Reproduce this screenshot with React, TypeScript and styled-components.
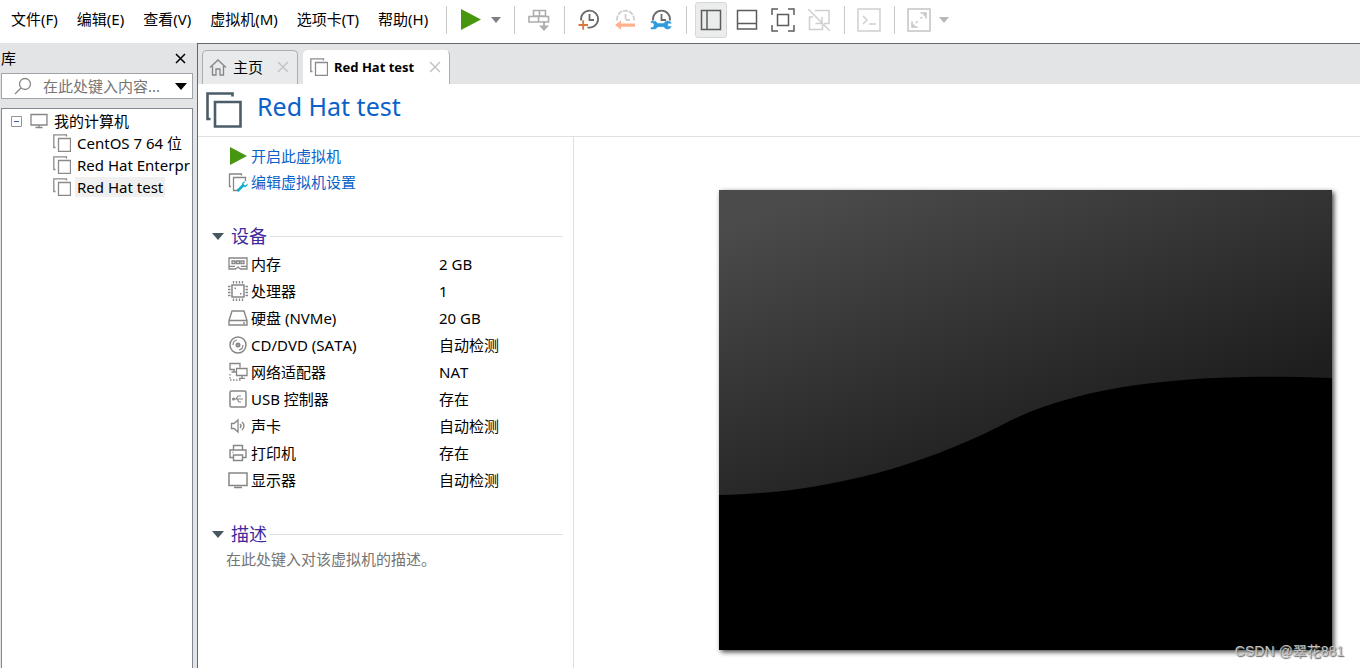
import React from "react";
import styled, { createGlobalStyle } from "styled-components";

const Global = createGlobalStyle`
  *, *::before, *::after { box-sizing: border-box; }
  html, body { margin: 0; }
  body {
    background: #fff;
    color: #000;
    font: 15px/20px "Noto Sans", "Noto Sans CJK SC", sans-serif;
    font-kerning: none;
    overflow: hidden;
  }
  button, input { font: inherit; color: inherit; }
  svg { display: block; flex: none; }
`;

const Window = styled.div`
  position: relative;
  display: flex;
  flex-direction: column;
  height: 100vh;
`;

const PlainButton = styled.button`
  display: flex;
  align-items: center;
  justify-content: center;
  padding: 0;
  border: 0;
  background: none;
  white-space: nowrap;
`;

/* Menu and toolbar */
const TopBar = styled.header`
  display: flex;
  align-items: center;
  flex: none;
  height: 43px;
  padding: 0 0 4px 11px;
`;

const Menu = styled.nav`
  display: flex;
  gap: 19px;
  margin-right: 18px;
  padding-bottom: 2px;
`;

const Separator = styled.span`
  width: 1px;
  height: 28px;
  background: #c8c8c8;
`;

const ToolGroup = styled.div<{ $end?: number }>`
  display: flex;
  align-items: center;
  gap: 4px;
  padding: 0 ${(p) => p.$end ?? 9}px 0 8px;
`;

const Tool = styled(PlainButton)<{ $on?: boolean }>`
  width: 32px;
  height: 36px;
  border: 1px solid ${(p) => (p.$on ? "#d5d8d8" : "transparent")};
  border-radius: 3px;
  background: ${(p) => (p.$on ? "#ebeded" : "transparent")};
`;

const Drop = styled(PlainButton)`
  width: 10px;
  height: 36px;
`;

/* Library */
const Body = styled.div`
  display: flex;
  flex: 1;
  min-height: 0;
  background: #e3e4e6;
`;

const Library = styled.aside`
  display: flex;
  flex-direction: column;
  flex: none;
  width: 197px;
  padding: 0 4px 0 1px;
`;

const LibraryHead = styled.div`
  display: flex;
  align-items: center;
  justify-content: space-between;
  height: 30px;
  padding-right: 7px;
`;

const Search = styled.div`
  display: flex;
  align-items: center;
  height: 26px;
  padding: 0 5px 0 12px;
  border: 1px solid #a0a4a8;
  background: #fff;
`;

const SearchInput = styled.input`
  flex: 1;
  min-width: 0;
  margin-left: 11px;
  padding: 0;
  border: 0;
  outline: 0;
  background: none;
  &::placeholder { color: #757575; opacity: 1; }
`;

const Tree = styled.ul`
  flex: 1;
  margin: 9px 0 0;
  padding: 1px 0 0;
  border: 1px solid #828790;
  border-bottom: 0;
  background: #fff;
  list-style: none;
  overflow: hidden;
`;

const TreeRow = styled.li<{ $child?: boolean }>`
  display: flex;
  align-items: center;
  height: 22px;
  padding-left: ${(p) => (p.$child ? 51 : 9)}px;
  white-space: nowrap;
`;

const TreeText = styled.span<{ $selected?: boolean }>`
  margin-left: 4px;
  padding: 0 2px;
  background: ${(p) => (p.$selected ? "#f0f0f0" : "transparent")};
`;

/* Main area */
const Main = styled.main`
  display: flex;
  flex-direction: column;
  flex: 1;
  min-width: 0;
  border: solid #65686b;
  border-width: 1px 0 0 1px;
`;

const Tabs = styled.div`
  display: flex;
  align-items: flex-end;
  flex: none;
  gap: 5px;
  height: 40px;
  padding-left: 4px;
`;

const Tab = styled.div<{ $active?: boolean }>`
  display: flex;
  align-items: center;
  height: 34px;
  padding: 0 8px 2px 6px;
  border: 1px solid ${(p) => (p.$active ? "#fff" : "#adadad")};
  border-right-color: #adadad;
  border-bottom: 0;
  border-radius: 5px 5px 0 0;
  background: ${(p) => (p.$active ? "#fff" : "#e9eaeb")};
`;

const TabName = styled(PlainButton)<{ $active?: boolean }>`
  gap: 6px;
  margin-right: ${(p) => (p.$active ? 15 : 14)}px;
  font-size: ${(p) => (p.$active ? 13 : 15)}px;
  font-weight: ${(p) => (p.$active ? 700 : 400)};
`;

const Title = styled.div`
  display: flex;
  align-items: center;
  flex: none;
  gap: 15px;
  height: 53px;
  padding: 0 8px;
  border-bottom: 1px solid #e0e0e0;
  background: #fff;
`;

const Heading = styled.h1`
  margin: 0 0 8px;
  color: #0a62c9;
  font-size: 25px;
  line-height: 32px;
  font-weight: 400;
`;

const Content = styled.div`
  display: flex;
  flex: 1;
  min-height: 0;
  background: #fff;
`;

const Details = styled.div`
  flex: none;
  width: 376px;
  padding: 6px 10px 0 14px;
  border-right: 1px solid #e0e0e0;
`;

const Actions = styled.div`
  padding-left: 16px;
`;

const Action = styled.a`
  display: flex;
  align-items: center;
  gap: 3px;
  height: 26px;
  color: #0a62c9;
  text-decoration: none;
`;

const Section = styled.section`
  margin-top: 28px;
`;

const SectionHead = styled.h2`
  display: flex;
  align-items: center;
  height: 26px;
  margin: 0 0 1px;
  color: #40299e;
  font-size: 18px;
  line-height: 26px;
  font-weight: 400;
  svg { margin-right: 7px; }
  &::after {
    content: "";
    flex: 1;
    height: 1px;
    margin-left: 3px;
    background: #e0e0e0;
  }
`;

const Devices = styled.table`
  width: 100%;
  border-spacing: 0;
  td, th {
    height: 27px;
    padding: 0;
    font-weight: 400;
    text-align: left;
  }
  th { width: 227px; }
`;

const DeviceName = styled.div`
  display: flex;
  align-items: center;
  gap: 3px;
  padding-left: 16px;
`;

const Note = styled.p`
  margin: 0;
  padding-left: 14px;
  color: #757575;
  line-height: 22px;
`;

const Preview = styled.div`
  flex: 1;
  min-width: 0;
  padding: 53px 28px 18px 145px;
`;

const Screen = styled.div`
  box-shadow: 2px 2px 5px rgba(0, 0, 0, 0.75);
  svg { width: 100%; height: auto; }
`;

const Watermark = styled.span`
  position: absolute;
  right: 16px;
  bottom: 7px;
  color: #c4c4c4;
  font: 14px/20px "Liberation Sans", "Noto Sans CJK SC", sans-serif;
  text-shadow: 1px 1px 1px #666;
`;

/* Icons */
type IconProps = { w: number; h: number; color?: string; children: React.ReactNode };
const Icon = ({ w, h, color = "#868686", children }: IconProps) => (
  <svg width={w} height={h} viewBox={`0 0 ${w} ${h}`} fill="none" stroke={color} strokeWidth="1.5" aria-hidden="true">
    {children}
  </svg>
);

const Play = ({ w, h }: { w: number; h: number }) => (
  <Icon w={w} h={h} color="none"><path d={`M0 0L${w} ${h / 2}L0 ${h}Z`} fill="#47960f" /></Icon>
);

const Down = ({ w = 10, h = 6, fill = "#808080" }) => (
  <Icon w={w} h={h} color="none"><path d={`M0 0H${w}L${w / 2} ${h}Z`} fill={fill} /></Icon>
);

const Cross = ({ size = 12, color = "#c4c4c4" }) => (
  <Icon w={size} h={size} color={color}><path d={`M1 1L${size - 1} ${size - 1}M${size - 1} 1L1 ${size - 1}`} /></Icon>
);

const Vm = () => (
  <Icon w={18} h={18} color="#8a8a8a"><path d="M5.5 4.5h12v13h-12zM2.5 13.5H.8V.8h12.7v1.7" strokeWidth="1.3" /></Icon>
);

const VmLarge = () => (
  <Icon w={36} h={36} color="#4b5d69"><path d="M9 10h25.500v24.500H9zM4.500 27H1.500V1.500h25v3" strokeWidth="2.600" /></Icon>
);

const VmEdit = () => (
  <Icon w={20} h={19}>
    <path d="M10 17.500H5.500v-13h12V8M3 13.500H1.500V1h12v1.500" strokeWidth="1.300" />
    <path d="M9.500 18l5.500-5.500" stroke="#10acd0" strokeWidth="2.600" />
    <path d="M17.500 8.500l-2 2 .5 1.500 1.500.5 2-2c.5 2-1 4-3.500 3.500l-2-2c-.3-2 1.500-4 3.500-3.500z" fill="#10acd0" stroke="none" />
  </Icon>
);

const Clock = ({ color = "#6a6a6a", low = false }) => (
  <>
    <path d={low ? "M3.100 11.500A8.500 8.500 0 1 1 19.900 11.500" : "M3.200 11.500A8.500 8.500 0 1 1 9.500 18.300"} stroke={color} strokeWidth="1.800" />
    <path d="M11.500 5v6H16" stroke={color} strokeWidth="1.800" />
  </>
);

const Snapshot = () => (
  <Icon w={22} h={22}><Clock /><path d="M.5 16h9.500M5.200 11.300v9.500" stroke="#d9763c" strokeWidth="1.800" /></Icon>
);

const Revert = () => (
  <Icon w={22} h={22}>
    <g strokeDasharray="5 1"><Clock color="#cfcfcf" low /></g>
    <path d="M1 16l6-4.500v3h14v3.200H7v3z" fill="#ffb18d" stroke="none" />
  </Icon>
);

const Manage = () => (
  <Icon w={22} h={22}>
    <Clock low />
    <path d="M1 12.300h4.500L7.800 14.500H14c.8-1.700 2-2.500 3.500-2.500 2 0 3.200.9 3.800 2.300h-3.500v3.200h3.500c-.7 1.500-1.800 2.500-3.800 2.500-1.500 0-2.700-.8-3.500-2.300H7.800l-2.300 2.300H1v-1.500h2.200l1-2.500-1-2.300H1z" fill="#2f9bdd" stroke="#2f9bdd" strokeWidth="0.500" />
  </Icon>
);

const Keys = () => (
  <Icon w={22} h={22} color="#adadad">
    <path d="M5.500 1.500h12V7h-12zM11.500 1.500V7M1 7.500h19.500V13H1zM10.500 7.500V13" strokeWidth="1.600" />
    <path d="M16 12v6" strokeWidth="1.800" />
    <path d="M11 16.500h10L16 22z" fill="#adadad" stroke="none" />
  </Icon>
);

const deviceIcons: Record<string, React.ReactNode> = {
  memory: <path d="M1 4h18v11h-6.500L10 13l-2.500 2H1zM4 7h3v2.500H4zM8.500 7h3v2.500h-3zM13 7h3v2.500h-3zM1 12.300h6M13 12.300h6" strokeWidth="1.300" />,
  cpu: (
    <>
      <path d="M4 4h12v12H4z" />
      <path d="M5.500 0v2.500M8.500 0v2.500M11.500 0v2.500M14.500 0v2.500M5.500 17.500V20M8.500 17.500V20M11.500 17.500V20M14.500 17.500V20M0 5.500h2.500M0 8.500h2.500M0 11.500h2.500M0 14.500h2.500M17.500 5.500H20M17.500 8.500H20M17.500 11.500H20M17.500 14.500H20" strokeWidth="1.300" />
      <path d="M6.500 7.300H8M12 12.700h1.500" strokeWidth="1.600" />
    </>
  ),
  disk: <path d="M4 3h12l3 9.500v4.500H1v-4.500zM1 12.500h18M15 15h2" strokeWidth="1.400" />,
  cd: (
    <>
      <circle cx="10" cy="10" r="8" />
      <circle cx="10" cy="10" r="1.500" strokeWidth="2" />
      <path d="M5 10a5 5 0 0 1 4-5M15 10a5 5 0 0 1-4 5" strokeWidth="1.200" />
    </>
  ),
  network: (
    <>
      <path d="M7 7.500H2v-6h10v4M8.500 6.500H19v7H8.500zM6 7.500V10M3.500 10H8M14 13.500V16M11 16.300h6" strokeWidth="1.300" />
      <path d="M2 12v6h11" strokeWidth="1.300" strokeDasharray="1.500 1.500" />
    </>
  ),
  usb: (
    <>
      <rect x="2" y="2" width="16" height="16" rx="1.500" />
      <path d="M5 10h10M8 10l2-3h3M9 10l2 3h2" strokeWidth="1.200" />
      <circle cx="5.500" cy="10" r="1.500" fill="#868686" stroke="none" />
    </>
  ),
  sound: <path d="M3.500 7.500H6L10 4v12l-4-3.500H3.500zM12 8q2 2 0 4M14 6q4 4 0 8" strokeWidth="1.300" />,
  printer: <path d="M5.500 7V2.500h9V7M5 14.500H2V7h16v7.500h-3M5.500 12h9v5.500h-9zM4.500 9.500h1" strokeWidth="1.400" />,
  display: <path d="M1 3h18v12.500H1zM6 17.500h8" />,
};

const devices = [
  ["memory", "内存", "2 GB"],
  ["cpu", "处理器", "1"],
  ["disk", "硬盘 (NVMe)", "20 GB"],
  ["cd", "CD/DVD (SATA)", "自动检测"],
  ["network", "网络适配器", "NAT"],
  ["usb", "USB 控制器", "存在"],
  ["sound", "声卡", "自动检测"],
  ["printer", "打印机", "存在"],
  ["display", "显示器", "自动检测"],
];

const menus = ["文件(F)", "编辑(E)", "查看(V)", "虚拟机(M)", "选项卡(T)", "帮助(H)"];
const machines = ["CentOS 7 64 位", "Red Hat Enterpr", "Red Hat test"];

export default function App() {
  return (
    <Window>
      <Global />
      <TopBar>
        <Menu>{menus.map((m) => <PlainButton key={m}>{m}</PlainButton>)}</Menu>
        <Separator />
        <ToolGroup $end={13}>
          <Tool aria-label="开启"><Play w={20} h={21} /></Tool>
          <Drop aria-label="电源选项"><Down /></Drop>
        </ToolGroup>
        <Separator />
        <ToolGroup>
          <Tool aria-label="发送按键"><Keys /></Tool>
        </ToolGroup>
        <Separator />
        <ToolGroup>
          <Tool aria-label="拍摄快照"><Snapshot /></Tool>
          <Tool aria-label="恢复快照"><Revert /></Tool>
          <Tool aria-label="管理快照"><Manage /></Tool>
        </ToolGroup>
        <Separator />
        <ToolGroup>
          <Tool $on aria-label="显示库">
            <Icon w={22} h={22} color="#5c5c5c"><path d="M1.500 1.500h19v19h-19zM7 1.500v19" /></Icon>
          </Tool>
          <Tool aria-label="缩略图栏">
            <Icon w={22} h={22} color="#5c5c5c"><path d="M1.500 1.500h19v18.500h-19zM1.500 14.500h19" /></Icon>
          </Tool>
          <Tool aria-label="全屏">
            <Icon w={24} h={24} color="#5c5c5c"><path d="M6.500 6.500h11v11h-11zM1 7V1h6M17 1h6v6M23 17v6h-6M7 23H1v-6" /></Icon>
          </Tool>
          <Tool aria-label="Unity">
            <Icon w={22} h={22} color="#cfcfcf"><path d="M7 1.500h14v13h-5M7.500 14.500H14V8M5 8H1.500v12.500h13V16M0 0l22 22" /></Icon>
          </Tool>
        </ToolGroup>
        <Separator />
        <ToolGroup>
          <Tool aria-label="控制台">
            <Icon w={24} h={24} color="#cfcfcf"><path d="M1 1h22v22H1zM6 8l4 4-4 4M12 16h7" /></Icon>
          </Tool>
        </ToolGroup>
        <Separator />
        <ToolGroup>
          <Tool aria-label="拉伸">
            <Icon w={24} h={24} color="#c4c4c4"><path d="M1 1h22v22H1zM13.500 5H19v5.500M5 13.500V19h5.500M18.500 5.500l-2 2M15 9l-1.500 1.500M5.500 18.500l2-2M9 15l1.500-1.500" /></Icon>
          </Tool>
          <Drop aria-label="拉伸选项"><Down fill="#b8b8b8" /></Drop>
        </ToolGroup>
      </TopBar>
      <Body>
        <Library>
          <LibraryHead>
            <span>库</span>
            <PlainButton aria-label="关闭库"><Cross size={11} color="#000" /></PlainButton>
          </LibraryHead>
          <Search>
            <Icon w={18} h={18}><circle cx="11" cy="7" r="5.500" strokeWidth="1.300" /><path d="M7 11l-6 6" strokeWidth="1.300" /></Icon>
            <SearchInput aria-label="搜索库" placeholder="在此处键入内容..." />
            <PlainButton aria-label="搜索选项"><Down w={12} h={7} fill="#000" /></PlainButton>
          </Search>
          <Tree>
            <TreeRow>
              <Icon w={11} h={11} color="#91969c"><path d="M.5.5h10v10H.5z" strokeWidth="1" /><path d="M3 5.500h5" stroke="#3d5aa8" strokeWidth="1" /></Icon>
              <Icon w={26} h={18}><g transform="translate(8 0)"><path d="M1 2.500h16v10.500H1zM9 13v2M5.500 15.500h7" strokeWidth="1.300" /></g></Icon>
              <TreeText>我的计算机</TreeText>
            </TreeRow>
            {machines.map((m, i) => (
              <TreeRow key={m} $child><Vm /><TreeText $selected={i === 2}>{m}</TreeText></TreeRow>
            ))}
          </Tree>
        </Library>
        <Main>
          <Tabs>
            <Tab>
              <TabName>
                <Icon w={18} h={18}><path d="M1 9.500L9 2l8 7.500M3.500 8v9H7v-6h4v6h3.500V8" strokeWidth="1.300" /></Icon>
                主页
              </TabName>
              <PlainButton aria-label="关闭主页"><Cross /></PlainButton>
            </Tab>
            <Tab $active>
              <TabName $active><Vm />Red Hat test</TabName>
              <PlainButton aria-label="关闭 Red Hat test"><Cross /></PlainButton>
            </Tab>
          </Tabs>
          <Title><VmLarge /><Heading>Red Hat test</Heading></Title>
          <Content>
            <Details>
              <Actions>
                <Action href="#power"><Icon w={20} h={18} color="none"><path d="M2 0l17 9-17 9z" fill="#47960f" /></Icon>开启此虚拟机</Action>
                <Action href="#settings"><VmEdit />编辑虚拟机设置</Action>
              </Actions>
              <Section>
                <SectionHead><Down w={12} h={7} fill="#465762" />设备</SectionHead>
                <Devices>
                  <tbody>
                    {devices.map(([icon, name, value]) => (
                      <tr key={name}>
                        <th scope="row"><DeviceName><Icon w={20} h={20}>{deviceIcons[icon]}</Icon>{name}</DeviceName></th>
                        <td>{value}</td>
                      </tr>
                    ))}
                  </tbody>
                </Devices>
              </Section>
              <Section>
                <SectionHead><Down w={12} h={7} fill="#465762" />描述</SectionHead>
                <Note>在此处键入对该虚拟机的描述。</Note>
              </Section>
            </Details>
            <Preview>
              <Screen>
                <svg viewBox="0 0 613 460" role="img" aria-label="虚拟机屏幕">
                  <defs>
                    <linearGradient id="glow" gradientUnits="userSpaceOnUse" x1="70" y1="15" x2="180" y2="325">
                      <stop offset="0" stopColor="#4b4b4b" />
                      <stop offset="1" stopColor="#1e1e1e" />
                    </linearGradient>
                  </defs>
                  <path d="M0 0h613v460H0z" fill="#000" />
                  <path d="M0 0H613V188C500 184 370 188 281 236C180 287 80 304 0 305Z" fill="url(#glow)" />
                </svg>
              </Screen>
            </Preview>
          </Content>
        </Main>
      </Body>
      <Watermark>CSDN @翠花881</Watermark>
    </Window>
  );
}
